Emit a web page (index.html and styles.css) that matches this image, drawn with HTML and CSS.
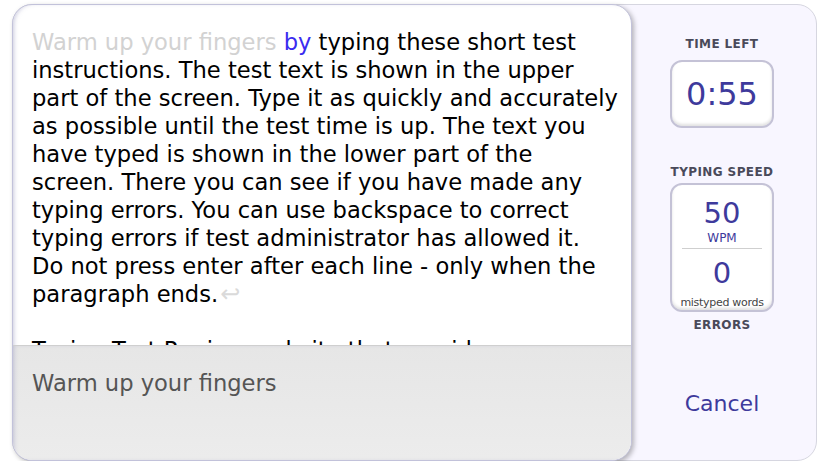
FILE: index.html
```html
<!DOCTYPE html>
<html>
<head>
<meta charset="utf-8">
<link rel="stylesheet" href="styles.css">
</head>
<body>
<div class="app">
  <div class="main">
    <div class="test-text">
      <p><span class="done">Warm up your fingers </span><span class="cur">by</span> typing these short test<br>instructions. The test text is shown in the upper<br>part of the screen. Type it as quickly and accurately<br>as possible until the test time is up. The text you<br>have typed is shown in the lower part of the<br>screen. There you can see if you have made any<br>typing errors. You can use backspace to correct<br>typing errors if test administrator has allowed it.<br>Do not press enter after each line - only when the<br>paragraph ends.<span class="ret">↩</span></p>
      <p>Typing Test Pro is a website that provides you</p>
    </div>
    <div class="input">Warm up your fingers</div>
  </div>
  <div class="side">
    <div class="label">TIME LEFT</div>
    <div class="box time">0:55</div>
    <div class="label label2">TYPING SPEED</div>
    <div class="box stats">
      <div class="num">50</div>
      <div class="unit">WPM</div>
      <div class="sep"></div>
      <div class="num">0</div>
      <div class="small">mistyped words</div>
    </div>
    <div class="label label3">ERRORS</div>
    <div class="cancel">Cancel</div>
  </div>
</div>
</body>
</html>
```
FILE: styles.css
```css
html, body { margin: 0; padding: 0; background: #fff; }
body { font-family: "DejaVu Sans", Verdana, sans-serif; }
.app {
  position: relative;
  margin: 4px 16px 0 12px;
  width: 805px;
  height: 457px;
  box-sizing: border-box;
  display: flex;
  background: #f8f6ff;
  border: 1px solid #d6d6e0;
  border-radius: 20px;
}
.main {
  width: 618px;
  margin: -1px 0 -1px -1px;
  display: flex;
  flex-direction: column;
  background: #fff;
  border: 1px solid #c2c2da;
  border-radius: 20px;
  box-shadow: 2px 2px 5px rgba(0,0,0,0.28), inset 3px 0 4px -2px rgba(150,150,190,0.5);
  overflow: hidden;
}
.test-text {
  height: 340px;
  overflow: hidden;
  padding: 23px 0 0 19px;
  box-sizing: border-box;
  font-size: 22.6px;
  line-height: 28px;
  color: #000;
  white-space: nowrap;
}
.test-text p { margin: 0 0 28px 0; }
.done { color: #d2d2d2; }
.cur { color: #3a2cf0; }
.ret { color: #dadada; font-size: 24px; margin-left: 2px; }
.input {
  flex: 1;
  border-top: 1px solid #cfcfcf;
  background: linear-gradient(#e6e6e6, #ececec);
  padding: 24px 19px;
  font-size: 22.6px;
  color: #555;
  box-shadow: inset 3px 0 4px -2px rgba(150,150,190,0.5);
}
.side {
  flex: 1;
  display: flex;
  flex-direction: column;
  align-items: center;
  padding-top: 32px;
  padding-right: 4px;
}
.label {
  font-size: 12px;
  font-weight: bold;
  color: #4a4a5a;
  letter-spacing: 0.4px;
}
.box {
  width: 104px;
  box-sizing: border-box;
  background: #fff;
  border: 2px solid #c4c2d6;
  border-radius: 12px;
  box-shadow: inset 0 -2px 3px rgba(0,0,0,0.12);
  color: #3e3a9c;
  text-align: center;
}
.time {
  margin-top: 9px;
  height: 68px;
  font-size: 32px;
  line-height: 64px;
}
.label2 { margin-top: 37px; }
.stats {
  margin-top: 4px;
  height: 129px;
  padding-top: 12px;
}
.num { font-size: 29px; line-height: 32px; }
.unit { font-size: 12px; line-height: 12px; margin-top: 3px; }
.sep { height: 1px; background: #cfcfcf; margin: 4px 10px 8px; }
.stats .small { font-size: 11px; color: #444; line-height: 14px; margin-top: 7px; letter-spacing: -0.3px; }
.label3 { margin-top: 6px; }
.cancel {
  margin-top: 59px;
  font-size: 22px;
  color: #3e3a9c;
}
```
